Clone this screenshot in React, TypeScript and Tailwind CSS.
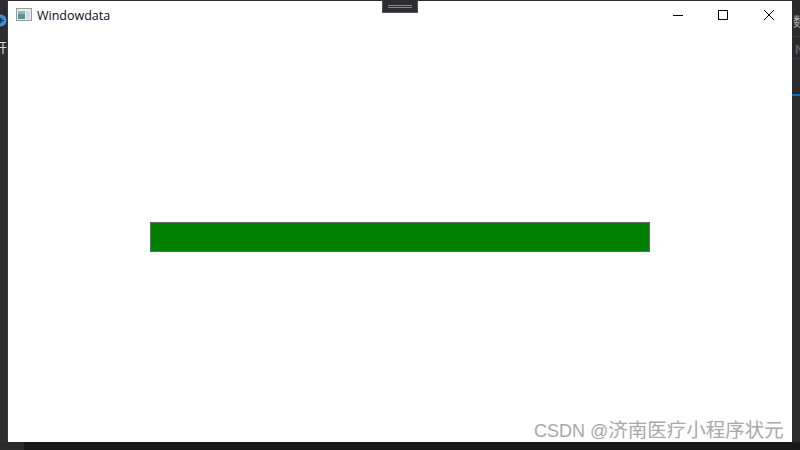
import React from 'react';

const FONT = "font-['Liberation_Sans','Noto_Sans_CJK_SC',sans-serif]";

const App: React.FC = () => {
  return (
    <div className={`relative w-[800px] h-[450px] overflow-hidden flex flex-col bg-[#1a1a1a] ${FONT}`}>
      <div className="flex h-[442px] pt-px bg-[#2b2b2d]">
        {/* editor behind, left edge */}
        <div className="w-2 overflow-hidden flex flex-col bg-[#2d2d30] border-r border-[#3a3a3e]">
          <div className="h-[13px] shrink-0" />
          <svg width="13" height="13" viewBox="0 0 13 13" className="-ml-[6px] shrink-0">
            <circle cx="6.5" cy="6.5" r="6" fill="#3f94d8" />
            <path d="M10 6.5H5M7.5 4L5 6.5L7.5 9" stroke="#2d2d30" strokeWidth="1.5" fill="none" />
          </svg>
          <div className="mt-[13px] -ml-[6px] w-4 text-[13px] leading-[15px] text-[#d8d8d8] shrink-0">开</div>
        </div>

        {/* the window */}
        <div className="flex-1 flex flex-col bg-white">
          <div className="h-[30px] pb-[2px] flex items-center shrink-0">
            <svg width="16" height="16" viewBox="0 0 16 16" className="ml-2">
              <rect x="0.5" y="1.5" width="15" height="12" fill="#e8ecec" stroke="#9a9a9a" />
              <rect x="2" y="4" width="7" height="8" fill="#4f9a94" />
              <rect x="2" y="4" width="7" height="3" fill="#8fb6c8" />
              <rect x="10" y="4" width="4" height="8" fill="#cfe0dc" />
            </svg>
            <span className="ml-[5px] mt-[2px] text-[12.5px] font-['Open_Sans','Noto_Sans',sans-serif] text-[#0a0a1e]">Windowdata</span>
            <div className="ml-auto flex items-center">
              <div className="w-[46px] h-[28px] pl-[2px] flex items-center justify-center">
                <svg width="10" height="10" viewBox="0 0 10 10">
                  <path d="M0 5.5H10" stroke="#000" fill="none" />
                </svg>
              </div>
              <div className="w-[46px] h-[28px] flex items-center justify-center">
                <svg width="10" height="10" viewBox="0 0 10 10">
                  <rect x="0.5" y="0.5" width="9" height="9" stroke="#000" fill="none" />
                </svg>
              </div>
              <div className="w-[46px] h-[28px] flex items-center justify-center">
                <svg width="10" height="10" viewBox="0 0 10 10">
                  <path d="M0 0L10 10M10 0L0 10" stroke="#000" fill="none" />
                </svg>
              </div>
            </div>
          </div>
          <div className="flex-1 flex items-center justify-center">
            <div className="w-[500px] h-[30px] bg-[#008000] border border-[#666666]" />
          </div>
        </div>

        {/* editor behind, right edge */}
        <div className="w-2 overflow-hidden flex flex-col bg-[#2b2b2d]">
          <div className="h-[13px] shrink-0" />
          <div className="ml-[1px] w-4 text-[13px] leading-[16px] text-[#b8b8b8] shrink-0">数</div>
          <div className="h-px mt-[6px] bg-[#3c3c40] shrink-0" />
          <div className="ml-[3px] mt-[5px] text-[13px] leading-[15px] text-[#5a5f68] font-bold shrink-0">N</div>
          <div className="h-px mt-px bg-[#3c3c40] shrink-0" />
          <div className="h-[2px] mt-[35px] bg-[#0e70c0] shrink-0" />
        </div>
      </div>

      {/* bottom strip */}
      <div className="flex-1 flex">
        <div className="w-6 bg-[#2b2b2b]" />
        <div className="flex-1 bg-[#181818]" />
      </div>

      {/* WPF debug handle */}
      <div className="absolute top-0 left-[382px] w-9 h-[13px] bg-[#2d2d30] border border-[#555558] border-t-0 flex flex-col items-center justify-center gap-px">
        <div className="w-6 h-px bg-[#8a8a8a]" />
        <div className="w-6 h-px bg-[#8a8a8a]" />
      </div>

      {/* watermark */}
      <div className="absolute left-[534px] top-[418px] text-[18px] leading-6 whitespace-nowrap text-[#a9a9a9]">
        CSDN @<span className="text-[19.5px]">济南医疗小程序状元</span>
      </div>
    </div>
  );
};

export default App;
